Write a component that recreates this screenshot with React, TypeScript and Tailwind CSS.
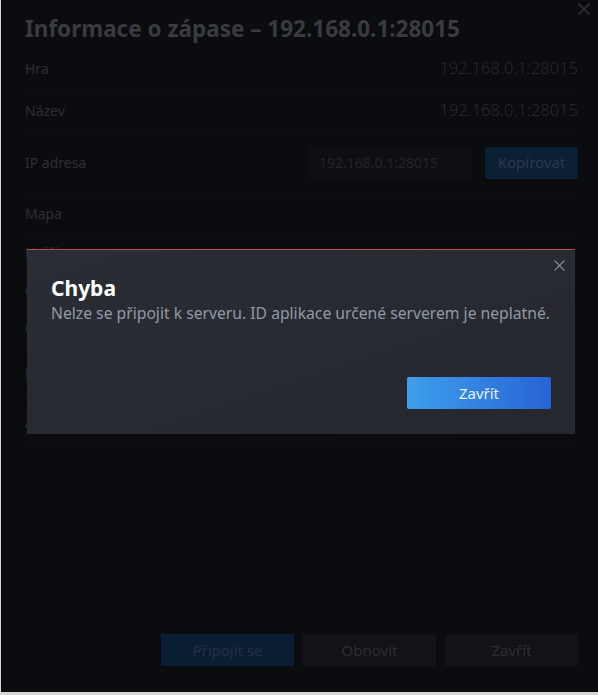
import React from "react";

const font = { fontFamily: '"Noto Sans", "Open Sans", Arial, sans-serif' };

function X({ className }: { className?: string }) {
  return (
    <svg className={className} viewBox="0 0 12 12" fill="none" stroke="currentColor" strokeWidth="1.4" strokeLinecap="round">
      <path d="M1 1 L11 11 M11 1 L1 11" />
    </svg>
  );
}

function Row({ label, value, h }: { label: string; value?: string; h: string }) {
  return (
    <div className={`flex items-center justify-between border-b border-[#0f1013] ${h}`}>
      <span className="text-[14px] text-[#2d2f33]">{label}</span>
      {value && <span className="text-[16.5px] font-light text-[#282a2e]">{value}</span>}
    </div>
  );
}

export default function App() {
  return (
    <div className="w-[598px] h-[695px] bg-[#d6d6d6] pl-[1px] pb-[3px]" style={font}>
      <div className="relative w-[597px] h-[692px] bg-[#0b0c0f] flex flex-col pl-[24px] pr-[20px]">
        <div className="absolute right-[8px] top-[3px] w-[12px] h-[12px] text-[#35373b]">
          <X className="w-[12px] h-[12px]" />
        </div>
        <div className="pt-[14px] h-[48px] text-[22.5px] font-bold text-[#393b3f] leading-[30px]">
          Informace o zápase – 192.168.0.1:28015
        </div>
        <Row label="Hra" value="192.168.0.1:28015" h="h-[42px]" />
        <Row label="Název" value="192.168.0.1:28015" h="h-[42px]" />
        <div className="flex items-center justify-between h-[62px] border-b border-[#0f1013]">
          <span className="text-[14px] text-[#2d2f33]">IP adresa</span>
          <div className="flex items-center gap-[14px]">
            <div className="w-[162px] h-[33px] bg-[#0e0f12] flex items-center px-[10px] text-[14px] text-[#222428]">
              192.168.0.1:28015
            </div>
            <div className="w-[93px] h-[32px] bg-[#0b1f35] rounded-[2px] flex items-center justify-center text-[15px] text-[#2b3a4c]">
              Kopírovat
            </div>
          </div>
        </div>
        <Row label="Mapa" h="h-[40px]" />
        <Row label="Hráči" h="h-[38px]" />
        <Row label="Chráněno VAC" h="h-[38px]" />
        <Row label="Chráněno heslem" h="h-[38px]" />
        <Row label="Ping" h="h-[50px]" />
        <Row label="Automaticky" h="h-[50px]" />
        <div className="flex-1" />
        <div className="flex justify-end gap-[9px] pb-[26px]">
          <div className="w-[133px] h-[32px] bg-[#0a1d33] flex items-center justify-center text-[15px] text-[#213144]">Připojit se</div>
          <div className="w-[133px] h-[32px] bg-[#121316] flex items-center justify-center text-[15px] text-[#2c2e32]">Obnovit</div>
          <div className="w-[133px] h-[32px] bg-[#121316] flex items-center justify-center text-[15px] text-[#2c2e32]">Zavřít</div>
        </div>

        <div className="absolute left-[26px] top-[249px] w-[548px] h-[185px] border-t border-[#c0474a] bg-gradient-to-br from-[#2a2d35] to-[#24272d] flex flex-col px-[24px]">
          <div className="absolute right-[10px] top-[10px] w-[11px] h-[11px] text-[#8a9099]">
            <X className="w-[11px] h-[11px]" />
          </div>
          <div className="pt-[24px] text-[21px] font-bold text-white leading-[28px]">Chyba</div>
          <div className="text-[15.7px] text-[#9199a3] leading-[22px] whitespace-nowrap">
            Nelze se připojit k serveru. ID aplikace určené serverem je neplatné.
          </div>
          <div className="flex-1" />
          <div className="flex justify-end pb-[25px]">
            <div className="w-[144px] h-[32px] rounded-[2px] bg-gradient-to-r from-[#3e9fec] to-[#2a62d6] flex items-center justify-center text-[15px] text-[#eaf2fb]">
              Zavřít
            </div>
          </div>
        </div>
      </div>
    </div>
  );
}
